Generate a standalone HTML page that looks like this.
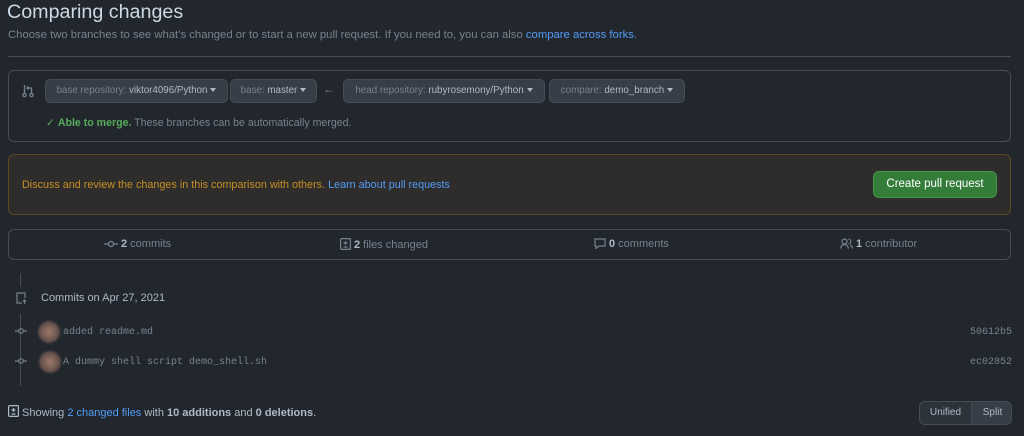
<!DOCTYPE html>
<html><head><meta charset="utf-8"><style>
*{box-sizing:border-box;margin:0;padding:0}
body{width:1024px;height:436px;overflow:hidden;background:#22272e;color:#adbac7;font-family:"Liberation Sans",sans-serif;font-size:12px;position:relative}
.a{position:absolute}
h1{position:absolute;left:7px;top:1px;font-size:19.7px;font-weight:400;color:#cdd9e5}
.sub{left:8px;top:29px;color:#768390;font-size:11.3px}
a{color:#539bf5;text-decoration:none}
.hr{left:8px;top:56px;width:1003px;height:1px;background:#444c56}
.box{left:8px;top:70px;width:1003px;height:72px;border:1px solid #444c56;border-radius:6px}
.btn{position:absolute;top:8px;height:24px;background:#373e47;border:1px solid #444c56;border-radius:5px;color:#768390;font-size:9.8px;line-height:22px;text-align:center;white-space:nowrap;overflow:hidden}
.btn b{font-weight:400;color:#adbac7}
.caret{display:inline-block;border-left:3px solid transparent;border-right:3px solid transparent;border-top:4px solid #adbac7;margin-left:3px;vertical-align:1px}
.yel{left:8px;top:154px;width:1003px;height:61px;border:1px solid #5a4a1f;background:#2e2d2b;border-radius:6px}
.cpr{position:absolute;right:13px;top:16px;width:124px;height:27px;background:#347d39;border:1px solid #46954a;border-radius:6px;color:#fff;font-size:11.5px;line-height:25px;text-align:center}
.stats{left:8px;top:229px;width:1003px;height:31px;border:1px solid #444c56;border-radius:6px}
.st{position:absolute;top:8px;color:#768390;font-size:11px}
.st b{color:#adbac7}
.st svg{vertical-align:-2px;margin-right:3px}
.mono{font-family:"Liberation Mono",monospace;font-size:10px;color:#768390}
.vl{position:absolute;left:20px;width:1px;background:#444c56}
.av{position:absolute;width:22px;height:22px;border-radius:50%;background:radial-gradient(#a07a6a,#5a4a48 70%,#22272e);filter:blur(1px)}
</style></head><body>
<h1>Comparing changes</h1>
<div class="a sub">Choose two branches to see what’s changed or to start a new pull request. If you need to, you can also <a>compare across forks</a>.</div>
<div class="a hr"></div>
<div class="a box">
<svg class="a" style="left:13px;top:13px" width="12" height="14" viewBox="0 0 12 14" fill="none" stroke="#768390" stroke-width="1.3"><circle cx="2.5" cy="11" r="1.6"/><circle cx="9.5" cy="11" r="1.6"/><path d="M2.5 1v8.5M9.5 9.5V4H5M6.5 2.5L5 4l1.5 1.5"/></svg>
<div class="btn" style="left:36px;width:183px">base repository: <b>viktor4096/Python</b><span class="caret"></span></div>
<div class="btn" style="left:221px;width:87px">base: <b>master</b><span class="caret"></span></div>
<div class="a" style="left:314px;top:11px;color:#768390;font-size:12px">←</div>
<div class="btn" style="left:334px;width:202px">head repository: <b>rubyrosemony/Python</b><span class="caret"></span></div>
<div class="btn" style="left:540px;width:136px">compare: <b>demo_branch</b><span class="caret"></span></div>
<div class="a" style="left:37px;top:46px;color:#768390;font-size:10.6px"><span style="color:#57ab5a">✓ <b style="font-weight:700">Able to merge.</b></span> These branches can be automatically merged.</div>
</div>
<div class="a yel">
<div class="a" style="left:13px;top:24px;color:#c69026;font-size:10.8px">Discuss and review the changes in this comparison with others. <a>Learn about pull requests</a></div>
<div class="cpr">Create pull request</div>
</div>
<div class="a stats">
<div class="st" style="left:95px"><svg width="14" height="10" viewBox="0 0 14 10" fill="none" stroke="#768390" stroke-width="1.3"><circle cx="7" cy="5" r="2.5"/><path d="M0 5h4.5M9.5 5H14"/></svg><b>2</b> commits</div>
<div class="st" style="left:331px"><svg width="11" height="12" viewBox="0 0 11 12" fill="none" stroke="#768390" stroke-width="1.2"><rect x="0.6" y="0.6" width="9.8" height="10.8" rx="1"/><path d="M5.5 3v4M3.5 5h4M3.5 9h4"/></svg><b>2</b> files changed</div>
<div class="st" style="left:585px"><svg width="12" height="11" viewBox="0 0 12 11" fill="none" stroke="#768390" stroke-width="1.2"><path d="M1 1h10v7H5l-3 2.5V8H1z"/></svg><b>0</b> comments</div>
<div class="st" style="left:831px"><svg width="13" height="11" viewBox="0 0 13 11" fill="none" stroke="#768390" stroke-width="1.2"><circle cx="4.5" cy="3.5" r="2.5"/><path d="M0.6 10.5c0-2.5 2-4 3.9-4s3.9 1.5 3.9 4M8.5 1.2a2.3 2.3 0 0 1 0 4.6M10 7c1.5.5 2.4 1.8 2.4 3.5"/></svg><b>1</b> contributor</div>
</div>
<div class="vl" style="top:273px;height:14px"></div>
<svg class="a" style="left:15px;top:292px" width="13" height="13" viewBox="0 0 13 13" fill="none" stroke="#768390" stroke-width="1.2"><path d="M7 11H2V1h8v5M9.5 12V8M8 9.5l1.5-1.5 1.5 1.5"/></svg>
<div class="a" style="left:41px;top:292px;font-size:11px;color:#adbac7">Commits on Apr 27, 2021</div>
<div class="vl" style="top:314px;height:72px"></div>
<svg class="a" style="left:15px;top:327px" width="12" height="8" viewBox="0 0 12 8" fill="none" stroke="#768390" stroke-width="1.2"><circle cx="6" cy="4" r="2.3"/><path d="M0 4h3.7M8.3 4H12"/></svg>
<svg class="a" style="left:15px;top:357px" width="12" height="8" viewBox="0 0 12 8" fill="none" stroke="#768390" stroke-width="1.2"><circle cx="6" cy="4" r="2.3"/><path d="M0 4h3.7M8.3 4H12"/></svg>
<div class="av" style="left:38px;top:321px"></div>
<div class="av" style="left:39px;top:351px"></div>
<div class="a mono" style="left:63px;top:327px">added readme.md</div>
<div class="a mono" style="left:63px;top:357px">A dummy shell script demo_shell.sh</div>
<div class="a mono" style="left:970px;top:327px">50612b5</div>
<div class="a mono" style="left:970px;top:357px">ec02852</div>
<div class="a" style="left:8px;top:405px;font-size:11px;color:#adbac7"><svg width="11" height="12" viewBox="0 0 11 12" fill="none" stroke="#adbac7" stroke-width="1.2" style="vertical-align:-1px"><rect x="0.6" y="0.6" width="9.8" height="10.8" rx="1"/><path d="M5.5 3v4M3.5 5h4M3.5 9h4"/></svg> Showing <a>2 changed files</a> with <b>10 additions</b> and <b>0 deletions</b>.</div>
<div class="a" style="left:919px;top:401px;width:93px;height:24px;border:1px solid #444c56;border-radius:6px;background:#2d333b;overflow:hidden;font-size:10px">
<div class="a" style="left:0;top:0;width:52px;height:22px;line-height:22px;text-align:center;color:#adbac7;border-right:1px solid #444c56">Unified</div>
<div class="a" style="left:52px;top:0;width:41px;height:22px;line-height:22px;text-align:center;color:#adbac7;background:#373e47">Split</div>
</div>
</body></html>
